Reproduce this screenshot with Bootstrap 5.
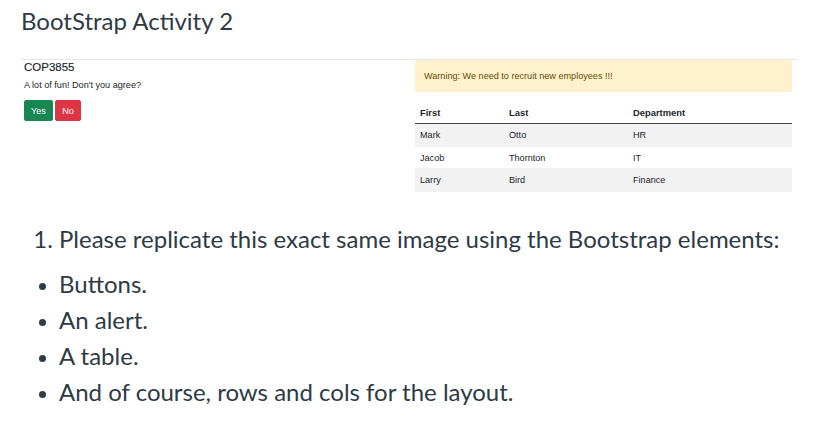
<!DOCTYPE html>
<html lang="en">
<head>
<meta charset="utf-8">
<title>BootStrap Activity 2</title>
<link href="https://cdn.jsdelivr.net/npm/bootstrap@5.3.0/dist/css/bootstrap.min.css" rel="stylesheet">
<style>
body { font-family: Lato, sans-serif; color: #2d3b45; background: #fff; overflow: hidden; }
.page-title { font-size: 24px; font-weight: 400; line-height: 29px; margin: 0; padding: 6px 0 0 21px; height: 59px; color: #2d3b45; }
.shot { margin: 0 25px 0 21px; border-top: 1px solid #e6e6e6; height: 144px; font-family: "Liberation Sans", sans-serif; color: #212529; display: flex; }
.shot-left { width: 394px; padding: 0 0 0 3px; flex: none; }
.shot-right { width: 377px; flex: none; }
.shot-h { font-size: 11.5px; font-weight: 400; line-height: 14px; margin: 0 0 5px; -webkit-text-stroke: .15px #212529; }
.shot-p { font-size: 9.1px; line-height: 12px; margin: 0 0 9px; }
.shot-btn { font-size: 9.1px; line-height: 12px; padding: 4px 0; border-radius: 2px; height: 21px; }
.btn-yes { width: 29px; }
.btn-no { width: 26px; }
.btn-gap { gap: 2px; }
.shot-alert { font-size: 9.1px; line-height: 12px; padding: 10px 9px 11px; margin: 0 0 8px; height: 32px; border-radius: 2px; background: #fff1cc; border: 0; color: #664d03; }
.shot-table { font-size: 9.1px; margin: 0; table-layout: fixed; width: 100%; }
.shot-table th, .shot-table td { padding: 1px 5px 0; height: 23px; line-height: 12px; vertical-align: middle; border-color: #f2f2f2; }
.shot-table tbody tr:nth-child(2) td { height: 22px; }
.shot-table thead th { font-size: 9.4px; padding-top: 3px; height: 23px; border-bottom: 1px solid #444; }
.instructions { font-size: 24px; line-height: 36px; margin: 0; padding: 0; }
.num-list { margin: 18px 0 0; padding-left: 59px; }
.dot-list { margin: 9px 0 0; padding-left: 59px; }
.dot-list li::marker { font-size: 20px; }
</style>
</head>
<body>
<h2 class="page-title">BootStrap Activity 2</h2>
<div class="shot">
  <div class="shot-left">
    <h4 class="shot-h">COP3855</h4>
    <p class="shot-p">A lot of fun! Don't you agree?</p>
    <div class="d-flex btn-gap">
      <button type="button" class="btn btn-success shot-btn btn-yes">Yes</button>
      <button type="button" class="btn btn-danger shot-btn btn-no">No</button>
    </div>
  </div>
  <div class="shot-right">
    <div class="alert alert-warning shot-alert" role="alert">Warning: We need to recruit new employees !!!</div>
    <table class="table table-striped shot-table">
      <colgroup><col style="width:89px"><col style="width:124px"><col></colgroup>
      <thead><tr><th>First</th><th>Last</th><th>Department</th></tr></thead>
      <tbody>
        <tr><td>Mark</td><td>Otto</td><td>HR</td></tr>
        <tr><td>Jacob</td><td>Thornton</td><td>IT</td></tr>
        <tr><td>Larry</td><td>Bird</td><td>Finance</td></tr>
      </tbody>
    </table>
  </div>
</div>
<div class="instructions">
  <ol class="num-list"><li>Please replicate this exact same image using the Bootstrap elements:</li></ol>
  <ul class="dot-list">
    <li>Buttons.</li>
    <li>An alert.</li>
    <li>A table.</li>
    <li>And of course, rows and cols for the layout.</li>
  </ul>
</div>
<script src="https://cdn.jsdelivr.net/npm/bootstrap@5.3.0/dist/js/bootstrap.bundle.min.js"></script>
</body>
</html>
